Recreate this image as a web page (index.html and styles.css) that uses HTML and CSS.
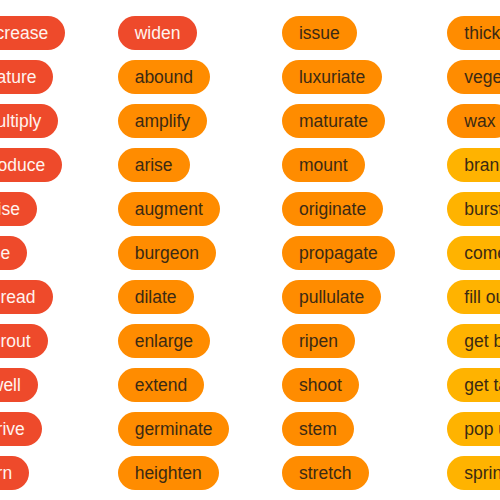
FILE: index.html
```html
<!DOCTYPE html>
<html lang="en">

<head>
    <meta charset="UTF-8">
    <meta name="viewport" content="width=device-width, initial-scale=1.0">
    <title>grow</title>
    <link rel="stylesheet" href="styles.css">
</head>

<body>
    <div class="words">
        <ul class="col">
            <li class="tag hot">increase</li>
            <li class="tag hot">mature</li>
            <li class="tag hot">multiply</li>
            <li class="tag hot">produce</li>
            <li class="tag hot">raise</li>
            <li class="tag hot">rise</li>
            <li class="tag hot">spread</li>
            <li class="tag hot">sprout</li>
            <li class="tag hot">swell</li>
            <li class="tag hot">thrive</li>
            <li class="tag hot">turn</li>
        </ul>
        <ul class="col">
            <li class="tag hot">widen</li>
            <li class="tag warm">abound</li>
            <li class="tag warm">amplify</li>
            <li class="tag warm">arise</li>
            <li class="tag warm">augment</li>
            <li class="tag warm">burgeon</li>
            <li class="tag warm">dilate</li>
            <li class="tag warm">enlarge</li>
            <li class="tag warm">extend</li>
            <li class="tag warm">germinate</li>
            <li class="tag warm">heighten</li>
        </ul>
        <ul class="col">
            <li class="tag warm">issue</li>
            <li class="tag warm">luxuriate</li>
            <li class="tag warm">maturate</li>
            <li class="tag warm">mount</li>
            <li class="tag warm">originate</li>
            <li class="tag warm">propagate</li>
            <li class="tag warm">pullulate</li>
            <li class="tag warm">ripen</li>
            <li class="tag warm">shoot</li>
            <li class="tag warm">stem</li>
            <li class="tag warm">stretch</li>
        </ul>
        <ul class="col">
            <li class="tag warm">thicken</li>
            <li class="tag warm">vegetate</li>
            <li class="tag warm">wax</li>
            <li class="tag mild">branch out</li>
            <li class="tag mild">burst forth</li>
            <li class="tag mild">come up</li>
            <li class="tag mild">fill out</li>
            <li class="tag mild">get bigger</li>
            <li class="tag mild">get taller</li>
            <li class="tag mild">pop up</li>
            <li class="tag mild">spring up</li>
        </ul>
    </div>
</body>

</html>
```

FILE: styles.css
```css
* {
    margin: 0;
    padding: 0;
}

html,
body {
    width: 500px;
    height: 500px;
    overflow: hidden;
    background: #fff;
}

body {
    font-family: "Liberation Sans", Arial, sans-serif;
    font-size: 17.5px;
}

ul,
li {
    list-style: none;
}

/* the word list is wider than the frame, so it starts left of it */
.words {
    display: flex;
    gap: 52.5px;
    margin-left: -35px;
    padding-top: 16px;
}

.col {
    display: flex;
    flex-direction: column;
    align-items: flex-start;
    gap: 10px;
    flex-shrink: 0;
}

.tag {
    height: 34px;
    line-height: 35px;
    padding: 0 17px;
    border-radius: 17px;
    white-space: nowrap;
    color: #3b2a14;
}

.tag.hot {
    background: #ee4a2b;
    color: #fff3ee;
}

.tag.warm {
    background: #ff8c00;
}

.tag.mild {
    background: #ffb300;
}
```
